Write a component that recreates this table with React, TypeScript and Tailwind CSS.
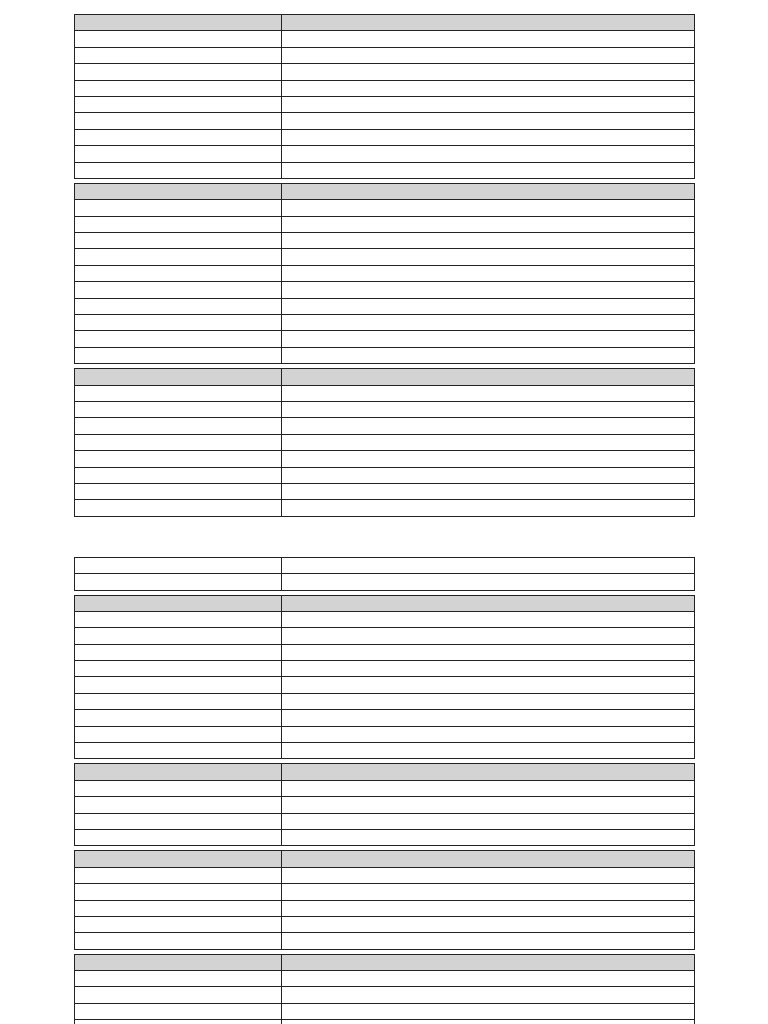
const groups: { header: boolean; rows: number }[][] = [
  [
    { header: true, rows: 9 },
    { header: true, rows: 10 },
    { header: true, rows: 8 },
  ],
  [
    { header: false, rows: 2 },
    { header: true, rows: 9 },
    { header: true, rows: 4 },
    { header: true, rows: 5 },
    { header: true, rows: 8 },
  ],
];

const Row = ({ head }: { head?: boolean }) => (
  <div
    className={`flex h-[16.4px] border-t border-[#222] ${
      head ? "bg-[#d3d3d3]" : "bg-white"
    }`}
  >
    <div className="w-[207.5px] border-r border-[#222]" />
    <div className="flex-1" />
  </div>
);

const Sheet = ({ header, rows }: { header: boolean; rows: number }) => (
  <div className="border-x border-b border-[#222]">
    {header && <Row head />}
    {Array.from({ length: rows }).map((_, i) => (
      <Row key={i} />
    ))}
  </div>
);

export default function App() {
  return (
    <div className="min-h-screen bg-white pt-[14px] font-['Liberation_Sans',sans-serif]">
      <div className="mx-auto flex w-[621px] flex-col gap-[40px]">
        {groups.map((g, gi) => (
          <div key={gi} className="flex flex-col gap-[4px]">
            {g.map((t, ti) => (
              <Sheet key={ti} header={t.header} rows={t.rows} />
            ))}
          </div>
        ))}
      </div>
    </div>
  );
}
